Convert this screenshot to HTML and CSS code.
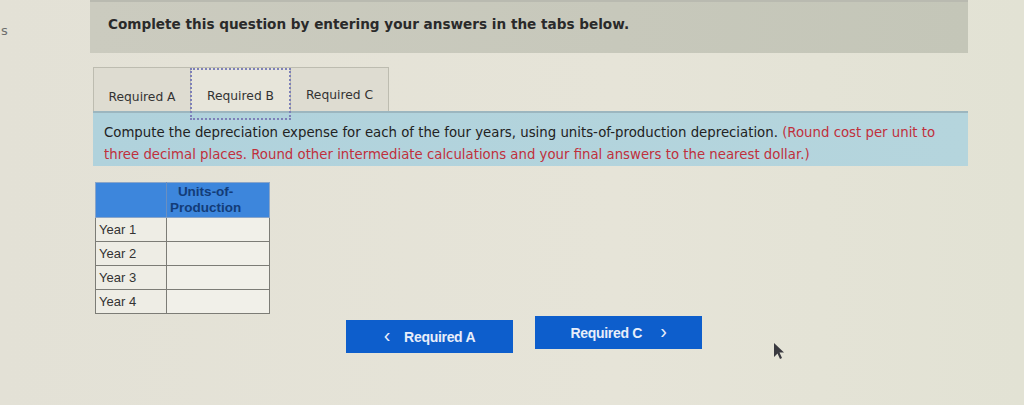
FILE: index.html
```html
<!DOCTYPE html>
<html>
<head>
<meta charset="utf-8">
<link rel="stylesheet" href="styles.css">
</head>
<body>
<div class="page">
  <div class="gutter"><span class="gut-s">s</span></div>
  <div class="main">
    <div class="banner">Complete this question by entering your answers in the tabs below.</div>
    <div class="tabs">
      <div class="tab">Required A</div>
      <div class="tab active">Required B</div>
      <div class="tab last">Required C</div>
    </div>
    <div class="instr"><span>Compute the depreciation expense for each of the four years, using units-of-production depreciation.</span> <span class="red">(Round cost per unit to three decimal places. Round other intermediate calculations and your final answers to the nearest dollar.)</span></div>
    <table class="grid">
      <tr class="head"><th class="blank"></th><th class="colh"><span class="colh-txt">Units-of-<br>Production</span></th></tr>
      <tr><td class="lbl">Year 1</td><td class="in"></td></tr>
      <tr><td class="lbl">Year 2</td><td class="in"></td></tr>
      <tr><td class="lbl">Year 3</td><td class="in"></td></tr>
      <tr><td class="lbl">Year 4</td><td class="in"></td></tr>
    </table>
    <div class="nav">
      <div class="btn prev"><span class="chev">&lsaquo;</span>Required A</div>
      <div class="btn next">Required C<span class="chev">&rsaquo;</span></div>
    </div>
  </div>
</div>
<svg class="cursor" width="14" height="18" viewBox="0 0 14 18"><path d="M2 1 L2 15 L5.5 11.5 L8 17 L10 16 L7.5 10.5 L12 10.5 Z" fill="#3a3a40"/></svg>
</body>
</html>
```
FILE: styles.css
```css
html, body {
  margin: 0;
  padding: 0;
}
body {
  width: 1024px;
  height: 405px;
  overflow: hidden;
  background: linear-gradient(90deg, #e3e1d6 0%, #e6e4d8 60%, #e2e2d4 100%);
  font-family: "DejaVu Sans", Verdana, sans-serif;
  position: relative;
}
.page {
  display: flex;
}
.gutter {
  width: 90px;
  flex: none;
}
.gut-s {
  display: block;
  margin: 23px 0 0 1px;
  font-size: 13px;
  color: #6e6e6e;
}
.main {
  width: 878px;
  flex: none;
}
.banner {
  height: 53px;
  box-sizing: border-box;
  padding: 14px 0 0 18px;
  background: linear-gradient(90deg, #cbcbbf 0%, #c7c8bb 60%, #c4c6b8 100%);
  border-top: 2px solid #b9bab0;
  font-size: 13.6px;
  font-weight: bold;
  color: #2a2a2a;
}
.tabs {
  display: flex;
  margin: 14px 0 0 3px;
  height: 44px;
}
.tab {
  width: 98px;
  box-sizing: border-box;
  border: 1px solid #bdbcb0;
  border-bottom: none;
  background: #dedcd1;
  font-size: 12.3px;
  color: #333;
  display: flex;
  align-items: center;
  justify-content: center;
  margin-right: -1px;
  padding-top: 14px;
}
.tab.last {
  width: 99px;
  padding-top: 10px;
}
.tab.active {
  width: 101px;
  background: #e7e5da;
  position: relative;
  padding-top: 13px;
}
.tab.active::after {
  content: "";
  position: absolute;
  left: -1px;
  right: -1px;
  top: 0;
  height: 52px;
  border: 2px dotted #7d80b8;
  box-sizing: border-box;
}
.instr {
  margin-left: 3px;
  height: 55px;
  box-sizing: border-box;
  padding: 9px 10px 0 11px;
  background: linear-gradient(90deg, #b0d2dc 0%, #b5d5dd 100%);
  border-top: 2px solid #9cb6bf;
  font-size: 13.3px;
  line-height: 22px;
  color: #222;
}
.red {
  color: #c0303c;
}
.grid {
  margin: 16px 0 0 5px;
  border-collapse: collapse;
  font-family: "Liberation Sans", Arial, sans-serif;
}
.grid th {
  background: #3d86dc;
  color: #133c78;
  font-size: 13.5px;
  font-weight: bold;
  height: 34px;
  padding: 0;
  line-height: 16px;
  border: 1px solid #8aa5c8;
}
.grid th.blank {
  width: 70px;
  border-right: 1px solid #6a8fc0;
}
.grid th.colh {
  width: 99px;
  text-align: left;
  padding-left: 3px;
}
.colh-txt {
  display: inline-block;
  text-align: center;
}
.grid td {
  height: 23px;
  border: 1px solid #7c7c76;
  padding: 0;
  background: #f1f0e8;
}
.grid td.lbl {
  font-size: 13px;
  color: #333;
  padding-left: 3px;
  background: #eeede5;
}
.grid td.in {
  background: #f1f0e9;
}
.nav {
  display: flex;
  gap: 22px;
  margin: 2px 0 0 256px;
}
.btn {
  width: 167px;
  height: 33px;
  background: #0d5ecc;
  color: #e8eefa;
  font-family: "Liberation Sans", Arial, sans-serif;
  font-weight: bold;
  font-size: 14px;
  display: flex;
  align-items: center;
  justify-content: center;
  letter-spacing: -0.3px;
}
.btn.prev {
  margin-top: 4px;
}
.chev {
  font-size: 20px;
  font-weight: normal;
  line-height: 1;
  margin-top: -3px;
}
.prev .chev {
  margin-right: 14px;
}
.next .chev {
  margin-left: 18px;
}
.cursor {
  position: absolute;
  left: 772px;
  top: 342px;
}
```
